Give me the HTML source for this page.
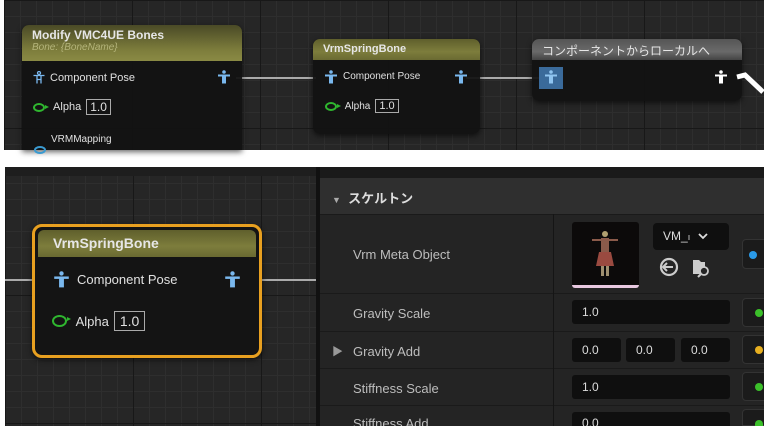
<!DOCTYPE html>
<html style="overflow:hidden;width:764px;height:426px"><head><meta charset="utf-8"><style>
*{box-sizing:border-box;margin:0;padding:0}
body{width:764px;height:426px;background:#fff;position:relative;overflow:hidden;font-family:"Liberation Sans","Noto Sans CJK JP",sans-serif;color:#ddd}
.grid{position:absolute;background-color:#262626;
background-image:linear-gradient(#181818 1px,transparent 1px),linear-gradient(90deg,#181818 1px,transparent 1px),linear-gradient(#2e2e2e 1px,transparent 1px),linear-gradient(90deg,#2e2e2e 1px,transparent 1px);
background-size:128px 128px,128px 128px,16px 16px,16px 16px}
.node{position:absolute;background:rgba(18,18,18,.94);border-radius:7px;box-shadow:0 2px 6px rgba(0,0,0,.6)}
.hd{border-radius:7px 7px 0 0;padding:3px 10px;color:#e6e6e6;font-weight:bold;font-size:12px;background:linear-gradient(180deg,#5f5f2c,#7d7d3c 60%,#6a6a32)}
.row{position:absolute;font-size:11px;color:#e0e0e0;display:flex;align-items:center;gap:5px}
.box{border:1px solid #aaa;padding:0 3px;font-size:12px}
.pin{display:inline-block;width:12px;height:9px;border:2.5px solid #2fb62f;border-radius:50%;position:relative}
.pin:after{content:"";position:absolute;right:-6px;top:0;border-left:4px solid #2fb62f;border-top:2px solid transparent;border-bottom:2px solid transparent}
.wire{position:absolute;height:2px;background:#aaa}
.prow{position:absolute;left:316px;right:0;border-top:1px solid #1a1a1a;background:#242424;font-size:13px;color:#bdbdbd}
.lab{position:absolute;left:33px}
.inp{position:absolute;background:#0f0f0f;border-radius:3px;height:24px;font-size:12px;color:#ddd;padding:5px 10px}
.rb{position:absolute;left:742px;width:30px;background:#1b1b1b;border:1px solid #333;border-radius:4px}
</style></head><body>
<div class="grid" style="left:4px;top:0;width:760px;height:150px"></div>
<div class="wire" style="left:236px;top:77px;width:80px"></div>
<div class="wire" style="left:466px;top:77px;width:75px"></div>
<div class="node" style="left:22px;top:25px;width:220px;height:125px;border-radius:7px 7px 0 0">
 <div class="hd" style="height:36px;background:linear-gradient(180deg,#4a4a26,#7d7d3c 70%,#8a8a44)">Modify VMC4UE Bones<div style="font-weight:normal;font-style:italic;font-size:10px;color:#b4b47a">Bone: {BoneName}</div></div>
</div>
<div class="row" style="left:33px;top:71px"><svg width="12" height="13" viewBox="0 0 12 13"><g fill="none" stroke="#7ab8ee" stroke-width="1.3"><circle cx="6" cy="2" r="1.5"/><path d="M0.5 4.5h11M4 4.5v8M8 4.5v8M4 8.5h4"/></g></svg>Component Pose</div>
<svg style="position:absolute;left:218px;top:70px" width="12" height="14" viewBox="0 0 12 14"><g fill="#7ab8ee"><circle cx="6" cy="2" r="1.8"/><rect x="0" y="4.5" width="12" height="2"/><rect x="4" y="4.5" width="4" height="9"/></g></svg>
<div class="row" style="left:33px;top:99px"><span class="pin"></span>&nbsp;Alpha <span class="box">1.0</span></div>
<div class="row" style="left:51px;top:134px;font-size:10px">VRMMapping</div>
<div style="position:absolute;left:34px;top:146px;width:12px;height:8px;border:2px solid #3a9ad0;border-radius:50%"></div>

<div class="node" style="left:313px;top:39px;width:167px;height:95px">
 <div class="hd" style="height:21px;padding-top:4px;font-size:11px">VrmSpringBone</div>
</div>
<svg style="position:absolute;left:325px;top:70px" width="12" height="14" viewBox="0 0 12 14"><g fill="#7ab8ee"><circle cx="6" cy="2" r="1.8"/><rect x="0" y="4.5" width="12" height="2"/><rect x="4" y="4.5" width="4" height="9"/></g></svg>
<div class="row" style="left:343px;top:71px;font-size:10px">Component Pose</div>
<svg style="position:absolute;left:455px;top:70px" width="12" height="14" viewBox="0 0 12 14"><g fill="#7ab8ee"><circle cx="6" cy="2" r="1.8"/><rect x="0" y="4.5" width="12" height="2"/><rect x="4" y="4.5" width="4" height="9"/></g></svg>
<div class="row" style="left:325px;top:99px;font-size:10px"><span class="pin"></span>&nbsp;Alpha <span class="box" style="font-size:11px">1.0</span></div>

<div class="node" style="left:532px;top:39px;width:210px;height:62px">
 <div class="hd" style="height:21px;padding-top:3px;font-size:12px;font-weight:normal;background:linear-gradient(180deg,#555,#6a6a6a 60%,#444)">コンポーネントからローカルへ</div>
</div>
<div style="position:absolute;left:539px;top:67px;width:24px;height:22px;background:#3a6a9a"></div>
<svg style="position:absolute;left:545px;top:70px" width="12" height="14" viewBox="0 0 12 14"><g fill="#8fc4f0"><circle cx="6" cy="2" r="1.8"/><rect x="0" y="4.5" width="12" height="2"/><rect x="4" y="4.5" width="4" height="9"/></g></svg>
<svg style="position:absolute;left:715px;top:70px" width="12" height="14" viewBox="0 0 12 14"><g fill="#fff"><circle cx="6" cy="2" r="1.8"/><rect x="0" y="4.5" width="12" height="2"/><rect x="4" y="4.5" width="4" height="9"/></g></svg>
<svg style="position:absolute;left:735px;top:68px" width="29" height="30"><path d="M2 9 L10 7 L28 24" stroke="#fff" stroke-width="5" fill="none"/></svg>

<div class="grid" style="left:5px;top:167px;width:311px;height:259px"></div>
<div style="position:absolute;left:5px;top:167px;width:311px;height:9px;background:#1e1e1e"></div>
<div class="wire" style="left:5px;top:279px;width:30px"></div>
<div class="wire" style="left:258px;top:279px;width:58px"></div>
<div class="node" style="left:32px;top:224px;width:230px;height:134px;border:3px solid #e8a020;border-radius:10px;background:#141414">
 <div class="hd" style="height:27px;margin:3px 3px 0;border-radius:6px 6px 0 0;font-size:14px;padding:5px 15px">VrmSpringBone</div>
</div>
<svg style="position:absolute;left:54px;top:271px" width="15" height="17" viewBox="0 0 12 14"><g fill="#7ab8ee"><circle cx="6" cy="2" r="1.8"/><rect x="0" y="4.5" width="12" height="2"/><rect x="4" y="4.5" width="4" height="9"/></g></svg>
<div class="row" style="left:77px;top:272px;font-size:13px">Component Pose</div>
<svg style="position:absolute;left:225px;top:271px" width="15" height="17" viewBox="0 0 12 14"><g fill="#7ab8ee"><circle cx="6" cy="2" r="1.8"/><rect x="0" y="4.5" width="12" height="2"/><rect x="4" y="4.5" width="4" height="9"/></g></svg>
<div class="row" style="left:52px;top:311px;font-size:13px"><span class="pin" style="width:15px;height:12px"></span>&nbsp;Alpha <span class="box" style="font-size:14px;padding:1px 5px">1.0</span></div>

<div style="position:absolute;left:316px;top:167px;width:448px;height:259px;background:#1a1a1a"></div>
<div style="position:absolute;left:316px;top:167px;width:4px;height:259px;background:#111"></div>
<div style="position:absolute;left:320px;top:178px;right:0;height:36px;background:#2f2f2f;font-size:13px;font-weight:bold;color:#ddd;padding:10px 0 0 12px"><span style="font-size:9px;color:#aaa">▼</span>&nbsp; スケルトン</div>
<div class="prow" style="left:320px;top:214px;height:79px"><div class="lab" style="top:32px">Vrm Meta Object</div></div>
<div class="prow" style="left:320px;top:293px;height:38px"><div class="lab" style="top:12px">Gravity Scale</div></div>
<div class="prow" style="left:320px;top:331px;height:37px"><span style="position:absolute;left:12px;top:11px;color:#999;font-size:11px">▶</span><div class="lab" style="top:12px">Gravity Add</div></div>
<div class="prow" style="left:320px;top:368px;height:37px"><div class="lab" style="top:12px">Stiffness Scale</div></div>
<div class="prow" style="left:320px;top:405px;height:21px;overflow:hidden"><div class="lab" style="top:10px">Stiffness Add</div></div>
<div style="position:absolute;left:553px;top:214px;width:1px;height:212px;background:#151515"></div>

<div style="position:absolute;left:572px;top:222px;width:67px;height:66px;background:#0c0a0a;border-radius:3px;border-bottom:3px solid #e8c8e0">
 <svg width="67" height="62"><g fill="#8a5a4a"><circle cx="33" cy="12" r="3" fill="#b0a070"/><rect x="20" y="17" width="26" height="2"/><rect x="29" y="16" width="8" height="14"/><path d="M27 30h12l3 14h-18z" fill="#9a4a40"/><rect x="29" y="44" width="3" height="10" fill="#a09070"/><rect x="34" y="44" width="3" height="10" fill="#a09070"/></g></svg>
</div>
<div style="position:absolute;left:653px;top:223px;width:76px;height:27px;background:#0f0f0f;border-radius:4px;font-size:12px;padding:6px 10px">VM_<span style="font-size:9px">ı</span> <svg width="10" height="7" style="margin-left:4px"><path d="M1 1l4 4 4-4" stroke="#ddd" stroke-width="1.8" fill="none"/></svg></div>
<svg style="position:absolute;left:658px;top:256px" width="60" height="22"><circle cx="11" cy="11" r="8" fill="none" stroke="#ccc" stroke-width="2.2"/><path d="M15 11H6M9 7l-4 4 4 4" stroke="#ccc" stroke-width="2" fill="none"/><path d="M35 4h6l2 2h4v12h-12z" fill="#ccc"/><circle cx="46" cy="15" r="4" fill="#242424" stroke="#ccc" stroke-width="1.8"/><path d="M43 18l-3 3" stroke="#ccc" stroke-width="2"/></svg>
<div class="rb" style="top:239px;height:30px"><span style="position:absolute;left:6px;top:11px;width:8px;height:8px;border-radius:4px;background:#2a9ae8"></span></div>

<div class="inp" style="left:572px;top:300px;width:158px">1.0</div>
<div class="inp" style="left:572px;top:338px;width:49px">0.0</div>
<div class="inp" style="left:626px;top:338px;width:49px">0.0</div>
<div class="inp" style="left:681px;top:338px;width:49px">0.0</div>
<div class="inp" style="left:572px;top:375px;width:158px">1.0</div>
<div class="inp" style="left:572px;top:412px;width:158px;height:14px;border-radius:3px 3px 0 0;padding-top:4px">0.0</div>
<div class="rb" style="top:298px;height:29px"><span style="position:absolute;left:12px;top:10px;width:8px;height:8px;border-radius:4px;background:#3bc02a"></span></div>
<div class="rb" style="top:335px;height:29px"><span style="position:absolute;left:12px;top:10px;width:8px;height:8px;border-radius:4px;background:#e8b020"></span></div>
<div class="rb" style="top:372px;height:29px"><span style="position:absolute;left:12px;top:10px;width:8px;height:8px;border-radius:4px;background:#3bc02a"></span></div>
<div class="rb" style="top:409px;height:17px;border-radius:4px 4px 0 0"><span style="position:absolute;left:12px;top:10px;width:8px;height:7px;border-radius:4px 4px 0 0;background:#3bc02a"></span></div>
</body></html>
